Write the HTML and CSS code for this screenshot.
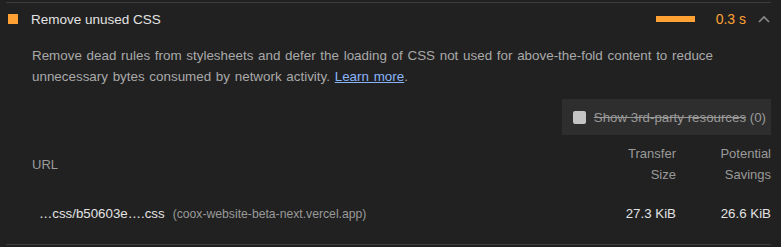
FILE: index.html
```html
<!DOCTYPE html>
<html>
<head>
<meta charset="utf-8">
<link rel="stylesheet" href="styles.css">
</head>
<body>
<div class="audit">
  <div class="header">
    <span class="icon"></span>
    <span class="title">Remove unused CSS</span>
    <span class="bar"></span>
    <span class="value">0.3 s</span>
    <svg class="chevron" width="12" height="8" viewBox="0 0 12 8"><path d="M1 7 L6 2 L11 7" fill="none" stroke="#8a8a8a" stroke-width="1.6"/></svg>
  </div>
  <div class="body">
    <p class="desc">Remove dead rules from stylesheets and defer the loading of CSS not used for above-the-fold content to reduce unnecessary bytes consumed by network activity. <a class="link" href="#">Learn more</a>.</p>
    <div class="filter-row">
      <div class="filter">
        <span class="checkbox"></span>
        <span class="filter-label"><s>Show 3rd-party resources</s> (0)</span>
      </div>
    </div>
    <div class="table">
      <div class="th th-url">URL</div>
      <div class="th th-num">Transfer<br>Size</div>
      <div class="th th-num">Potential<br>Savings</div>
      <div class="td td-url"><span class="url">…css/b50603e….css</span><span class="host">(coox-website-beta-next.vercel.app)</span></div>
      <div class="td td-num">27.3 KiB</div>
      <div class="td td-num">26.6 KiB</div>
    </div>
  </div>
</div>
</body>
</html>
```

FILE: styles.css
```css
html, body {
  margin: 0;
  padding: 0;
  background: #212121;
  font-family: "Liberation Sans", Arial, sans-serif;
}
.audit {
  margin: 2px 10px 0 6px;
  border-top: 1px solid #3d3d3d;
  border-bottom: 1px solid #3d3d3d;
  height: 243px;
  box-sizing: border-box;
}
.header {
  display: flex;
  align-items: center;
  height: 32px;
  padding-left: 2px;
}
.icon {
  width: 10px;
  height: 10px;
  background: #ffa233;
  flex: none;
}
.title {
  margin-left: 13px;
  font-size: 13.5px;
  color: #e3e3e3;
  flex: 1;
}
.bar {
  width: 39px;
  height: 6px;
  background: #ffa233;
  flex: none;
}
.value {
  margin-left: 21px;
  font-size: 14px;
  color: #ffa233;
  flex: none;
}
.chevron {
  margin-left: 12px;
  margin-right: 1px;
  flex: none;
}
.body {
  padding-left: 26px;
}
.desc {
  margin: 10px 0 0 0;
  font-size: 13.4px;
  word-spacing: 1px;
  line-height: 21px;
  color: #a9a9a9;
  padding-right: 30px;
}
.link {
  color: #8ab4f8;
  text-decoration: underline;
}
.filter-row {
  display: flex;
  justify-content: flex-end;
  margin-top: 12px;
}
.filter {
  display: flex;
  align-items: center;
  background: #2e2e2e;
  height: 36px;
  padding: 0 5px 0 11px;
}
.checkbox {
  width: 13px;
  height: 13px;
  background: #c4c4c4;
  border-radius: 2px;
  margin-right: 8px;
}
.filter-label {
  font-size: 13.3px;
  color: #9a9a9a;
}
.table {
  display: grid;
  grid-template-columns: 1fr 95px 95px;
  margin-top: 8px;
}
.th {
  font-size: 13px;
  color: #9a9a9a;
  line-height: 21px;
}
.th-url {
  align-self: center;
}
.th-num {
  text-align: right;
}
.td {
  font-size: 13.3px;
  color: #e3e3e3;
  padding-top: 18px;
  line-height: 21px;
}
.td-url {
  padding-left: 7px;
}
.url {
  margin-right: 8px;
}
.host {
  font-size: 12.2px;
  color: #9a9a9a;
}
.td-num {
  text-align: right;
}
```
